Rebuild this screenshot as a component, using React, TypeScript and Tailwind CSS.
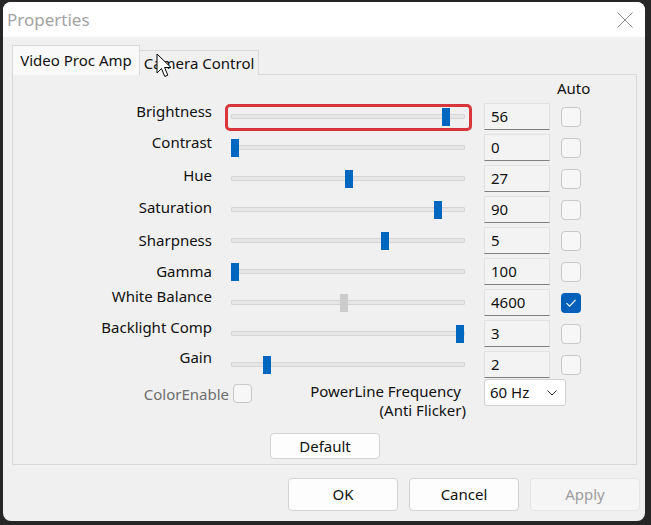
import React from "react";

const FONT = { fontFamily: '"Segoe UI", "Noto Sans", "Liberation Sans", sans-serif' };

type Row = { label: string; value: string; thumb: number; lift: number; disabled?: boolean; auto?: boolean };

const rows: Row[] = [
  { label: "Brightness", value: "56", thumb: 211, lift: 10 },
  { label: "Contrast", value: "0", thumb: 0, lift: 10 },
  { label: "Hue", value: "27", thumb: 114, lift: 6 },
  { label: "Saturation", value: "90", thumb: 203, lift: 4 },
  { label: "Sharpness", value: "5", thumb: 150, lift: 0 },
  { label: "Gamma", value: "100", thumb: 0, lift: 0 },
  { label: "White Balance", value: "4600", thumb: 109, lift: 12, disabled: true, auto: true },
  { label: "Backlight Comp", value: "3", thumb: 225, lift: 12 },
  { label: "Gain", value: "2", thumb: 32, lift: 14 },
];

function CheckBox({ checked }: { checked?: boolean }) {
  if (checked) {
    return (
      <div className="w-[20px] h-[20px] rounded-[4px] bg-[#005fb8] flex items-center justify-center">
        <svg width="12" height="10" viewBox="0 0 12 10">
          <path d="M1.5 5.2 L4.6 8.2 L10.6 1.8" fill="none" stroke="#ffffff" strokeWidth="1.1" />
        </svg>
      </div>
    );
  }
  return <div className="w-[20px] h-[20px] rounded-[4px] bg-[#f7f7f7] border border-[#c8c8c8]" />;
}

export default function App() {
  return (
    <div className="relative w-[651px] h-[525px] bg-[#262626] pt-[2px] pl-[3px] overflow-hidden" style={FONT}>
      <div className="w-[642px] h-[519px] rounded-[8px] overflow-hidden bg-[#f0f0f0] flex flex-col">
        {/* Title bar */}
        <div className="h-[35px] bg-white flex items-center justify-between shrink-0">
          <span className="pl-[4px] text-[17px] text-[#a3a3a3] leading-none">Properties</span>
          <div className="w-[30px] h-[35px] flex items-center justify-center mr-[5px]">
            <svg width="16" height="16" viewBox="0 0 16 16">
              <path d="M0.5 0.5 L15.5 15.5 M15.5 0.5 L0.5 15.5" stroke="#8c8c8c" strokeWidth="1" />
            </svg>
          </div>
        </div>

        {/* Body */}
        <div className="flex flex-col pl-[9px] pt-[8px]">
          {/* Tabs */}
          <div className="flex items-end h-[30px] relative z-10">
            <div className="w-[128px] h-[30px] bg-[#f9f9f9] border border-b-0 border-[#d9d9d9] flex items-center justify-center text-[15px] text-[#111] leading-none">
              Video Proc Amp
            </div>
            <div className="w-[119px] h-[25px] bg-[#f0f0f0] border border-l-0 border-b-0 border-[#d9d9d9] flex items-center justify-center text-[15px] text-[#111] leading-none">
              Camera Control
            </div>
          </div>
          {/* Panel */}
          <div className="w-[625px] h-[391px] -mt-[1px] border border-[#d9d9d9] bg-[#f0f0f0] flex flex-col">
            <div className="h-[26px] flex items-center">
              <span className="ml-[544px] text-[15px] text-[#111] leading-none">Auto</span>
            </div>
            {rows.map((r, i) => (
              <div key={r.label} className="relative h-[31px] flex items-center">
                <div
                  className="w-[199px] text-right text-[15px] text-[#111] leading-none"
                  style={{ marginBottom: r.lift }}
                >
                  {r.label}
                </div>
                <div className="relative ml-[19px] w-[234px] h-[18px] flex items-center">
                  <div className="w-full h-[5px] bg-[#e6e6e6] border border-[#d5d5d5] rounded-[1px]" />
                  <div
                    className={`absolute top-0 w-[8px] h-[18px] ${r.disabled ? "bg-[#cccccc]" : "bg-[#0067c0]"}`}
                    style={{ left: r.thumb }}
                  />
                  {i === 0 && (
                    <div className="absolute -left-[6px] -top-[4px] w-[247px] h-[27px] border-[3px] border-[#d8363c] rounded-[5px]" />
                  )}
                </div>
                <div className="ml-[19px] w-[66px] h-[27px] bg-[#f3f3f3] border border-[#e2e2e2] border-b-[#7f7f7f] flex items-center pl-[6px] text-[15px] text-[#111] leading-none">
                  {r.value}
                </div>
                <div className="ml-[11px]">
                  <CheckBox checked={r.auto} />
                </div>
              </div>
            ))}
            {/* bottom controls */}
            <div className="h-[53px] flex items-start">
              <div className="w-[216px] pt-[5px] text-right text-[15px] leading-[19px] text-[#6d6d6d]">ColorEnable</div>
              <div className="ml-[4px] mt-[4px] w-[19px] h-[19px] rounded-[4px] bg-[#f7f7f7] border border-[#c8c8c8]" />
              <div className="w-[214px] pt-[2px] flex flex-col items-end text-[15px] leading-[19px] text-[#111]">
                <span className="pr-[5px]">PowerLine Frequency</span>
                <span>(Anti Flicker)</span>
              </div>
              <div className="ml-[18px] -mt-[1px] w-[82px] h-[27px] bg-white border border-[#d0d0d0] rounded-[3px] flex items-center justify-between pl-[5px] pr-[8px] text-[15px] text-[#111] leading-none">
                <span>60 Hz</span>
                <svg width="10" height="6" viewBox="0 0 10 6">
                  <path d="M0.5 0.5 L5 5 L9.5 0.5" fill="none" stroke="#333" strokeWidth="1" />
                </svg>
              </div>
            </div>
            <div className="ml-[257px] w-[110px] h-[26px] bg-[#fdfdfd] border border-[#d3d3d3] rounded-[4px] flex items-center justify-center text-[15px] text-[#111] leading-none">
              Default
            </div>
          </div>
        </div>

        {/* Dialog buttons */}
        <div className="flex justify-end pr-[5px] gap-[11px] mt-[13px]">
          <div className="w-[110px] h-[33px] bg-[#fdfdfd] border border-[#d3d3d3] rounded-[4px] flex items-center justify-center text-[15px] text-[#111] leading-none">OK</div>
          <div className="w-[110px] h-[33px] bg-[#fdfdfd] border border-[#d3d3d3] rounded-[4px] flex items-center justify-center text-[15px] text-[#111] leading-none">Cancel</div>
          <div className="w-[110px] h-[33px] bg-[#f5f5f5] border border-[#e5e5e5] rounded-[4px] flex items-center justify-center text-[15px] text-[#9d9d9d] leading-none">Apply</div>
        </div>
      </div>

      {/* mouse cursor */}
      <svg className="absolute z-20 left-[156px] top-[53px]" width="18" height="26" viewBox="0 0 18 26">
        <path d="M1 1 L1 20 L5.5 15.5 L8.8 23.5 L11.8 22.2 L8.6 14.5 L15 14.5 Z" fill="#ffffff" stroke="#000000" strokeWidth="1" strokeLinejoin="round" />
      </svg>
    </div>
  );
}
